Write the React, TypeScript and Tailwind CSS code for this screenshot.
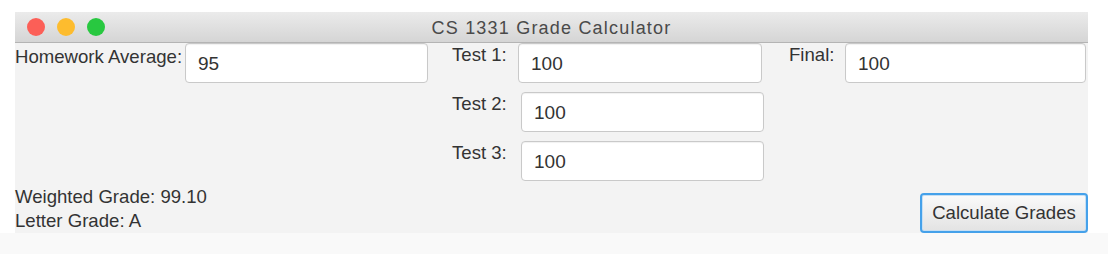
const font = { fontFamily: '"Liberation Sans", Arial, sans-serif' }

function Field({ value, width }: { value: string; width: string }) {
    return (
        <div
            className={`${width} h-[40px] flex items-center pl-[12px] pt-[3px] bg-white border border-[#c9c9c9] rounded-[4px] shadow-[inset_0_1px_1px_rgba(0,0,0,0.06)] text-[19px] text-[#333]`}
        >
            {value}
        </div>
    )
}

export default function App() {
    return (
        <div className="w-[1108px] h-[254px] bg-white flex flex-col overflow-hidden" style={font}>
            <div className="pt-[12px] pl-[15px]">
                <div className="w-[1073px] h-[221px] flex flex-col bg-[#f3f3f3]">
                    {/* title bar */}
                    <div className="relative h-[31px] flex items-center justify-center bg-gradient-to-b from-[#ebebeb] to-[#d5d5d5] border-b border-[#b4b4b4]">
                        <div className="absolute left-[12px] top-[6px] flex gap-[12px]">
                            <span className="w-[18px] h-[18px] rounded-full bg-[#fc5f57]" />
                            <span className="w-[18px] h-[18px] rounded-full bg-[#fdbc2e]" />
                            <span className="w-[18px] h-[18px] rounded-full bg-[#28c840]" />
                        </div>
                        <span className="text-[18px] tracking-[1.2px] text-[#4a4a4a] leading-none pt-[1px]">CS 1331 Grade Calculator</span>
                    </div>

                    {/* content */}
                    <div className="flex-1 flex text-[18.6px] text-[#333]">
                        <div className="w-[413px] flex flex-col justify-between">
                            <div className="flex items-start">
                                <div className="w-[170px] pt-[5px] leading-[18px] whitespace-nowrap">Homework Average:</div>
                                <Field value="95" width="w-[243px]" />
                            </div>
                            <div className="leading-[24px]">
                                <div>Weighted Grade: 99.10</div>
                                <div>Letter Grade: A</div>
                            </div>
                        </div>

                        <div className="ml-[24px] w-[312px] flex flex-col gap-[9px]">
                            <div className="flex items-start">
                                <div className="w-[66px] pt-[3px] leading-[18px]">Test 1:</div>
                                <Field value="100" width="w-[244px]" />
                            </div>
                            <div className="flex items-start">
                                <div className="w-[69px] pt-[3px] leading-[18px]">Test 2:</div>
                                <Field value="100" width="w-[243px]" />
                            </div>
                            <div className="flex items-start">
                                <div className="w-[69px] pt-[3px] leading-[18px]">Test 3:</div>
                                <Field value="100" width="w-[243px]" />
                            </div>
                        </div>

                        <div className="ml-[25px] w-[299px] flex flex-col justify-between">
                            <div className="flex items-start">
                                <div className="w-[56px] pt-[3px] leading-[18px]">Final:</div>
                                <Field value="100" width="w-[241px]" />
                            </div>
                            <button className="self-end w-[168px] h-[40px] rounded-[4px] border-2 border-[#45a1ea] bg-gradient-to-b from-[#fafafa] to-[#e3e3e3] shadow-[inset_0_0_0_1px_#c7dff3] text-[18.6px] text-[#333]">
                                Calculate Grades
                            </button>
                        </div>
                    </div>
                </div>
            </div>
            <div className="flex-1 bg-[#f9f9f9]" />
        </div>
    )
}
